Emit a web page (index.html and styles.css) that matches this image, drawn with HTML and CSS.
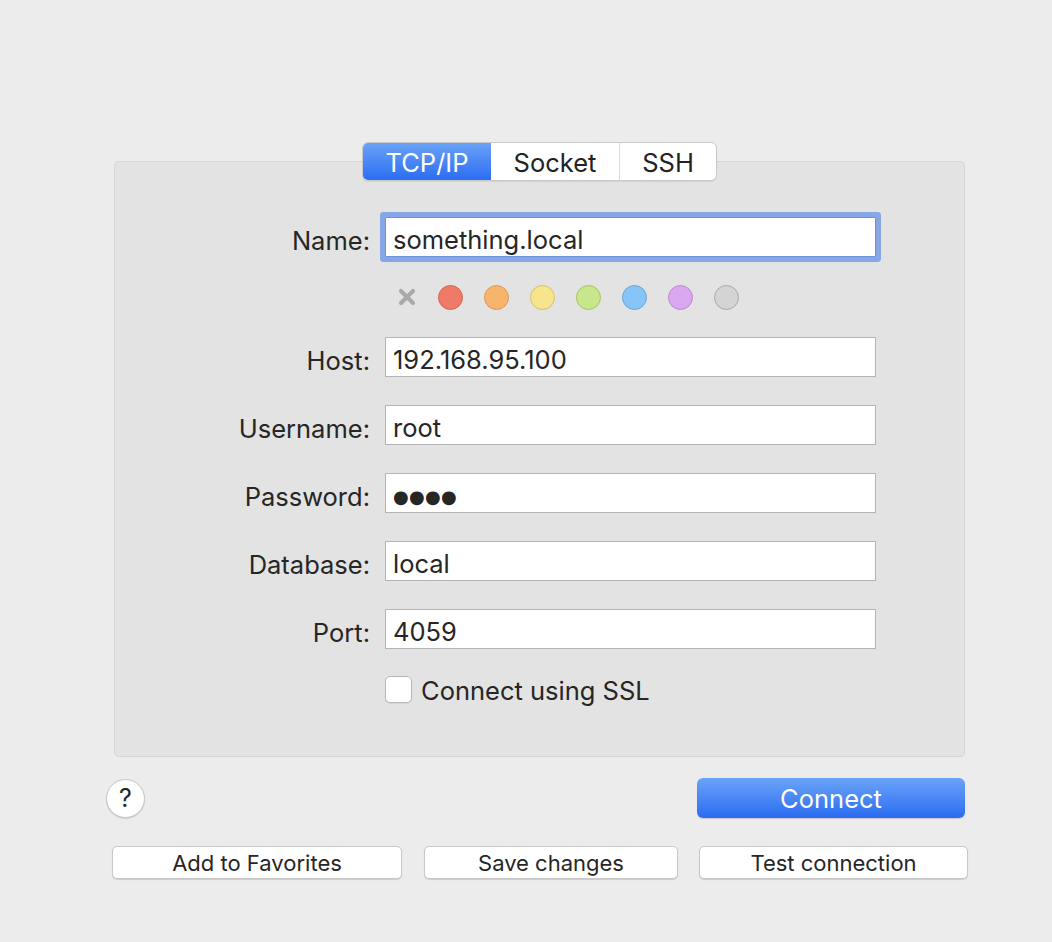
FILE: index.html
```html
<!DOCTYPE html>
<html>
<head>
<meta charset="utf-8">
<link rel="stylesheet" href="styles.css">
</head>
<body>
<div class="page">
  <div class="panel">
    <div class="tabs">
      <div class="tab tab-active tab-tcp">TCP/IP</div>
      <div class="tab tab-socket">Socket</div>
      <div class="tab tab-ssh">SSH</div>
    </div>
    <div class="form">
      <label class="label">Name:</label>
      <div class="field field-focus">something.local</div>

      <div class="spacer"></div>
      <div class="colors">
        <svg class="clear" width="20" height="20" viewBox="0 0 20 20"><path d="M4 4 L16 16 M16 4 L4 16" stroke="#a9a9a9" stroke-width="4.2" stroke-linecap="round"/></svg>
        <span class="dot dot-red"></span>
        <span class="dot dot-orange"></span>
        <span class="dot dot-yellow"></span>
        <span class="dot dot-green"></span>
        <span class="dot dot-blue"></span>
        <span class="dot dot-purple"></span>
        <span class="dot dot-grey"></span>
      </div>

      <label class="label">Host:</label>
      <div class="field">192.168.95.100</div>

      <label class="label">Username:</label>
      <div class="field">root</div>

      <label class="label">Password:</label>
      <div class="field"><span class="pass">●●●●</span></div>

      <label class="label">Database:</label>
      <div class="field">local</div>

      <label class="label">Port:</label>
      <div class="field">4059</div>

      <div class="spacer"></div>
      <div class="check-row"><span class="checkbox"></span><span class="check-text">Connect using SSL</span></div>
    </div>
  </div>

  <div class="actions">
    <div class="help">?</div>
    <div class="connect">Connect</div>
  </div>

  <div class="buttons">
    <div class="btn btn-fav">Add to Favorites</div>
    <div class="btn btn-save">Save changes</div>
    <div class="btn btn-test">Test connection</div>
  </div>
</div>
</body>
</html>
```

FILE: styles.css
```css
html, body {
  margin: 0;
  padding: 0;
  background: #ececec;
}
body {
  font-family: "Inter", "Liberation Sans", sans-serif;
  color: #262626;
  width: 1052px;
  height: 942px;
  overflow: hidden;
}
.page {
  padding-top: 161px;
}
.panel {
  margin-left: 114px;
  width: 851px;
  height: 596px;
  box-sizing: border-box;
  background: #e3e3e3;
  border: 1px solid #d6d6d6;
  border-radius: 5px;
}
.tabs {
  display: flex;
  width: fit-content;
  margin: -20px auto 0;
  height: 39px;
  box-sizing: border-box;
  background: #fff;
  border: 1px solid #c9c9c9;
  border-radius: 6px;
  box-shadow: 0 1px 1px rgba(0,0,0,0.08);
  overflow: hidden;
}
.tab {
  display: flex;
  align-items: center;
  justify-content: center;
  padding-top: 2px;
  box-sizing: border-box;
  font-size: 25.5px;
  color: #222;
  border-left: 1px solid #dcdcdc;
}
.tab-tcp { width: 128px; border-left: none; }
.tab-socket { width: 128px; border-left: none; }
.tab-ssh { width: 97px; }
.tab-active {
  background: linear-gradient(#6aa3f8, #2b6cf2);
  color: #fff;
}
.form {
  display: grid;
  grid-template-columns: 255px 491px;
  column-gap: 15px;
  row-gap: 28px;
  align-items: center;
  margin-top: 36px;
}
.label {
  text-align: right;
  font-size: 25.5px;
  height: 40px;
  box-sizing: border-box;
  padding-top: 7px;
  line-height: 33px;
  color: #262626;
}
.spacer {
  height: 1px;
}
.field {
  height: 40px;
  box-sizing: border-box;
  background: #fff;
  border: 1px solid #b4b4b4;
  font-size: 25.5px;
  padding-top: 6px;
  line-height: 32px;
  padding-left: 7px;
  color: #262626;
}
.field-focus {
  border-color: #6e91dc;
  box-shadow: 0 0 0 5px #86a6e6;
  border-radius: 1px;
}
.pass {
  font-family: "DejaVu Sans", sans-serif;
  font-size: 18px;
  letter-spacing: 0.3px;
  vertical-align: 2px;
}
.colors {
  display: flex;
  align-items: center;
  height: 24px;
  gap: 21px;
  padding-left: 12px;
}
.clear {
  width: 20px;
  height: 20px;
}
.dot {
  width: 25px;
  height: 25px;
  flex: none;
  box-sizing: border-box;
  border-radius: 50%;
  border: 1.5px solid;
}
.dot-red { background: #ef7b66; border-color: #d2644f; }
.dot-orange { background: #f7b46c; border-color: #d99956; }
.dot-yellow { background: #f7e58d; border-color: #d3c26b; }
.dot-green { background: #c8e68b; border-color: #a5c46a; }
.dot-blue { background: #87c4f7; border-color: #68a5d7; }
.dot-purple { background: #daa8f0; border-color: #b68acf; }
.dot-grey { background: #d4d4d4; border-color: #a9a9a9; }
.check-row {
  display: flex;
  align-items: center;
  height: 27px;
  gap: 9px;
  margin-top: -1px;
}
.checkbox {
  width: 27px;
  height: 27px;
  flex: none;
  box-sizing: border-box;
  background: #fff;
  border: 1px solid #b6b6b6;
  border-radius: 5px;
  box-shadow: 0 1px 1px rgba(0,0,0,0.06);
}
.check-text {
  font-size: 25.5px;
  color: #262626;
  padding-top: 2px;
}
.actions {
  display: flex;
  align-items: center;
  justify-content: space-between;
  margin-left: 106px;
  width: 859px;
  margin-top: 21px;
}
.help {
  width: 39px;
  height: 39px;
  box-sizing: border-box;
  border-radius: 50%;
  background: #fff;
  border: 1px solid #c4c4c4;
  box-shadow: 0 1px 1px rgba(0,0,0,0.12);
  display: flex;
  align-items: center;
  justify-content: center;
  font-size: 25px;
  color: #262626;
}
.connect {
  width: 268px;
  height: 40px;
  box-sizing: border-box;
  padding-top: 1px;
  border-radius: 6px;
  background: linear-gradient(#6ba3f8, #2a6cf2);
  color: #fff;
  font-size: 25.5px;
  display: flex;
  align-items: center;
  justify-content: center;
  box-shadow: 0 1px 1px rgba(0,0,0,0.15);
}
.buttons {
  display: flex;
  margin-left: 112px;
  margin-top: 28px;
  gap: 22px;
}
.btn {
  height: 33px;
  box-sizing: border-box;
  background: #fff;
  border: 1px solid #c8c8c8;
  border-radius: 5px;
  box-shadow: 0 1px 1px rgba(0,0,0,0.14);
  display: flex;
  align-items: center;
  justify-content: center;
  font-size: 22px;
  color: #262626;
}
.btn-fav { width: 290px; }
.btn-save { width: 254px; }
.btn-test { width: 269px; margin-left: -1px; }
```
